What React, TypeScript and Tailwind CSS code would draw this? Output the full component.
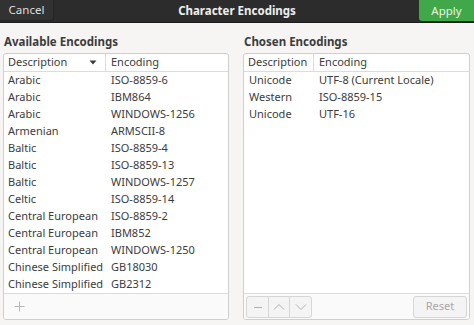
import React from "react";

const left: [string, string][] = [
  ["Arabic", "ISO-8859-6"],
  ["Arabic", "IBM864"],
  ["Arabic", "WINDOWS-1256"],
  ["Armenian", "ARMSCII-8"],
  ["Baltic", "ISO-8859-4"],
  ["Baltic", "ISO-8859-13"],
  ["Baltic", "WINDOWS-1257"],
  ["Celtic", "ISO-8859-14"],
  ["Central European", "ISO-8859-2"],
  ["Central European", "IBM852"],
  ["Central European", "WINDOWS-1250"],
  ["Chinese Simplified", "GB18030"],
  ["Chinese Simplified", "GB2312"],
];

const right: [string, string][] = [
  ["Unicode", "UTF-8 (Current Locale)"],
  ["Western", "ISO-8859-15"],
  ["Unicode", "UTF-16"],
];

export default function App() {
  return (
    <div
      className="w-[474px] h-[325px] bg-[#f6f5f4] flex flex-col text-[11px] text-[#3c3c3c] overflow-hidden"
      style={{ fontFamily: '"Noto Sans", "Open Sans", sans-serif' }}
    >
      {/* header */}
      <div className="h-[23px] bg-[#2c2c2c] border-b border-[#1c1c1c] flex items-start justify-between relative shrink-0">
        <div className="h-[21px] w-[54px] bg-[#323232] border-r border-b border-[#252525] rounded-br-[3px] flex items-center justify-center text-[#dedede] text-[11.5px]">
          Cancel
        </div>
        <div className="absolute left-0 right-0 top-0 h-[22px] flex items-center justify-center font-bold text-[#eeeeec] pointer-events-none text-[11.5px]">
          Character Encodings
        </div>
        <div className="h-[21px] w-[55px] bg-[#41a84a] rounded-bl-[3px] flex items-center justify-center text-[#e6f4e6] text-[11.5px]">
          Apply
        </div>
      </div>

      <div className="flex flex-1 px-[3px] gap-[14px] pb-[6px]">
        {/* left panel */}
        <div className="w-[226px] flex flex-col">
          <div className="font-bold h-[30px] flex items-end pb-[3px] pl-[1px] text-[11.5px]">Available Encodings</div>
          <div className="flex-1 border border-[#cfcfcd] rounded-[3px] bg-white flex flex-col overflow-hidden">
            <div className="h-[18px] flex border-b border-[#dcdcdb] shrink-0">
              <div className="w-[102px] border-r border-[#dcdcdb] flex items-center px-[4px] justify-between">
                <span>Description</span>
                <svg width="8" height="5" viewBox="0 0 8 5" className="mr-[4px]">
                  <path d="M0.5 0.5 L7.5 0.5 L4 4.5 Z" fill="#3c3c3c" />
                </svg>
              </div>
              <div className="flex items-center px-[5px]">Encoding</div>
            </div>
            <div className="flex-1 overflow-hidden">
              {left.map(([d, e], i) => (
                <div key={i} className="h-[17px] flex items-center">
                  <div className="w-[102px] pl-[4px] whitespace-nowrap">{d}</div>
                  <div className="pl-[5px] whitespace-nowrap">{e}</div>
                </div>
              ))}
            </div>
            <div className="h-[26px] border-t border-[#dcdcdb] bg-[#fafafa] flex items-center pl-[10px] shrink-0">
              <svg width="11" height="11" viewBox="0 0 11 11">
                <path d="M5.5 0.5 V10.5 M0.5 5.5 H10.5" stroke="#b8b8b8" strokeWidth="1" />
              </svg>
            </div>
          </div>
        </div>

        {/* right panel */}
        <div className="flex-1 flex flex-col">
          <div className="font-bold h-[30px] flex items-end pb-[3px] pl-[1px] text-[11.5px]">Chosen Encodings</div>
          <div className="flex-1 border border-[#cfcfcd] rounded-[3px] bg-white flex flex-col overflow-hidden mr-[1px]">
            <div className="h-[18px] flex border-b border-[#dcdcdb] shrink-0">
              <div className="w-[70px] border-r border-[#dcdcdb] flex items-center px-[4px]">Description</div>
              <div className="flex items-center px-[5px]">Encoding</div>
            </div>
            <div className="flex-1">
              {right.map(([d, e], i) => (
                <div key={i} className="h-[17px] flex items-center">
                  <div className="w-[70px] pl-[5px] whitespace-nowrap">{d}</div>
                  <div className="pl-[5px] whitespace-nowrap">{e}</div>
                </div>
              ))}
            </div>
            <div className="h-[26px] border-t border-[#dcdcdb] bg-[#fafafa] flex items-center justify-between px-[2px] shrink-0">
              <div className="flex h-[22px] border border-[#d6d6d6] rounded-[3px] bg-[#f4f4f4]">
                <div className="w-[22px] flex items-center justify-center border-r border-[#d6d6d6]">
                  <svg width="10" height="10" viewBox="0 0 10 10">
                    <path d="M1 5.5 H9" stroke="#b0b0b0" strokeWidth="1" />
                  </svg>
                </div>
                <div className="w-[21px] flex items-center justify-center border-r border-[#d6d6d6]">
                  <svg width="12" height="8" viewBox="0 0 12 8">
                    <path d="M1 6.5 L6 1.5 L11 6.5" stroke="#b0b0b0" strokeWidth="1" fill="none" />
                  </svg>
                </div>
                <div className="w-[21px] flex items-center justify-center">
                  <svg width="12" height="8" viewBox="0 0 12 8">
                    <path d="M1 1.5 L6 6.5 L11 1.5" stroke="#b0b0b0" strokeWidth="1" fill="none" />
                  </svg>
                </div>
              </div>
              <div className="h-[22px] w-[54px] border border-[#d6d6d6] rounded-[3px] bg-[#f4f4f4] flex items-center justify-center text-[#a8a8a8]">
                Reset
              </div>
            </div>
          </div>
        </div>
      </div>
    </div>
  );
}
